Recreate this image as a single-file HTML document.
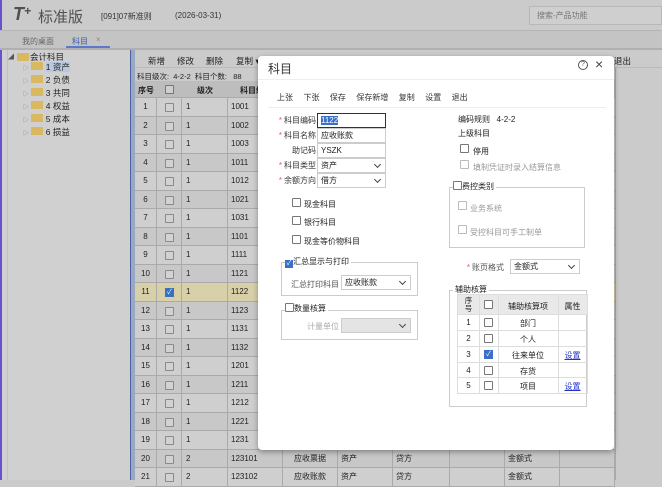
<!DOCTYPE html>
<html><head><meta charset="utf-8">
<style>
*{margin:0;padding:0;box-sizing:border-box}
body{width:662px;height:480px;overflow:hidden;position:relative;background:#cbcbcb;font-family:"Liberation Sans","Noto Sans CJK SC",sans-serif;font-size:8px;color:#222}
.a{position:absolute}
.cb{position:absolute;width:9px;height:9px;border:1px solid #777;border-radius:1px;background:#fff}
.cbd{position:absolute;width:9px;height:9px;border:1px solid #8a8a8a;border-radius:1px;background:#d2d2d2}
.row{position:absolute;left:135px;width:480px;height:18.5px;border-bottom:1px solid #aaa}
.row div{position:absolute;top:0;height:100%;line-height:18px;border-right:1px solid #aaa;font-size:8px;color:#222}
.inp{position:absolute;height:15px;border:1px solid #ccc;background:#fff;font-size:8px;line-height:13px;padding-left:3px;color:#222}
.sel::after{content:"";position:absolute;right:5px;top:3px;width:4px;height:4px;border-right:1px solid #444;border-bottom:1px solid #444;transform:rotate(45deg)}
.lbl{position:absolute;font-size:8px;color:#333;text-align:right}
.req::before{content:"*";color:#e55;margin-right:2px}
</style></head><body>
<div class="a" style="left:0;top:0;width:2px;height:480px;background:#6a4fd0"></div>
<div class="a" style="left:13px;top:4px;font-size:18px;font-weight:bold;font-style:italic;color:#505050">T<span style="font-size:12px;vertical-align:top">+</span></div>
<div class="a" style="left:38px;top:6px;font-size:15px;color:#505050">标准版</div>
<div class="a" style="left:101px;top:11px;font-size:8px;color:#333">[091]07新准则</div>
<div class="a" style="left:175px;top:11px;font-size:8px;color:#333">(2026-03-31)</div>
<div class="a" style="left:529px;top:6px;width:133px;height:19px;border:1px solid #b8b8b8;background:#cfcfcf;font-size:8px;color:#777;line-height:17px;padding-left:7px">搜索-产品功能</div>
<div class="a" style="left:0;top:30px;width:662px;height:1px;background:#b5b5b5"></div>
<div class="a" style="left:0;top:31px;width:662px;height:17px;background:#c4c4c4"></div>
<div class="a" style="left:22px;top:36px;color:#666">我的桌面</div>
<div class="a" style="left:72px;top:36px;color:#3a5fa8">科目</div>
<div class="a" style="left:96px;top:35px;color:#888">×</div>
<div class="a" style="left:66px;top:46px;width:44px;height:2px;background:#5a7ac8"></div>
<div class="a" style="left:0;top:48px;width:662px;height:2px;background:#b0b0b0"></div>
<div class="a" style="left:2px;top:50px;width:128px;height:430px;background:#d0d0d0"></div>
<div class="a" style="left:7px;top:50px;width:1px;height:430px;background:#c0c0c0"></div>
<div class="a" style="left:130px;top:50px;width:1px;height:430px;background:#4a62a0"></div>
<div class="a" style="left:131px;top:50px;width:4px;height:430px;background:#9aa8c4"></div>
<div class="a" style="left:8px;top:52px;font-size:6px;color:#555">◢</div>
<div class="a" style="left:17px;top:53px;width:12px;height:8px;background:#d8b860;border-radius:1px"></div>
<div class="a" style="left:30px;top:51px;font-size:8.5px">会计科目</div>
<div class="a" style="left:23px;top:62px;line-height:11px;font-size:8.5px">
<div><span style="color:#888;font-size:6px">▷</span> <span style="display:inline-block;width:12px;height:8px;background:#d8b860"></span> <span style="background:#b8c8e0">1 资产</span></div>
<div><span style="color:#888;font-size:6px">▷</span> <span style="display:inline-block;width:12px;height:8px;background:#d8b860"></span> 2 负债</div>
<div><span style="color:#888;font-size:6px">▷</span> <span style="display:inline-block;width:12px;height:8px;background:#d8b860"></span> 3 共同</div>
<div><span style="color:#888;font-size:6px">▷</span> <span style="display:inline-block;width:12px;height:8px;background:#d8b860"></span> 4 权益</div>
<div><span style="color:#888;font-size:6px">▷</span> <span style="display:inline-block;width:12px;height:8px;background:#d8b860"></span> 5 成本</div>
<div><span style="color:#888;font-size:6px">▷</span> <span style="display:inline-block;width:12px;height:8px;background:#d8b860"></span> 6 损益</div>
</div>
<div class="a" style="left:135px;top:50px;width:527px;height:18px;background:#cbcbcb;border-bottom:1px solid #bbb"></div>
<div class="a" style="left:148px;top:55px;font-size:8.5px">新增</div>
<div class="a" style="left:177px;top:55px;font-size:8.5px">修改</div>
<div class="a" style="left:206px;top:55px;font-size:8.5px">删除</div>
<div class="a" style="left:236px;top:55px;font-size:8.5px">复制 ▾</div>
<div class="a" style="left:614px;top:55px;font-size:8.5px">退出</div>
<div class="a" style="left:137px;top:71px;font-size:7.5px">科目级次: &nbsp;4-2-2 &nbsp;科目个数: &nbsp; 88</div>
<div class="a" style="left:135px;top:81px;width:480px;height:17px;background:#bdbdbd;border-bottom:1px solid #aaa"></div>
<div class="a" style="left:135px;top:85px;width:22px;text-align:center;font-weight:bold">序号</div>
<div class="cb" style="left:165px;top:85px;background:#cfcfcf"></div>
<div class="a" style="left:182px;top:85px;width:46px;text-align:center;font-weight:bold">级次</div>
<div class="a" style="left:240px;top:85px;font-weight:bold">科目编码</div>
<div class="a" style="left:615px;top:68px;width:1px;height:412px;background:#aaa"></div>
<div class="row" style="top:98px;background:#cfcfcf"><div style="left:0;width:22px;text-align:center">1</div><div style="left:22px;width:25px"></div><div style="left:47px;width:46px;padding-left:4px">1</div><div style="left:93px;width:55px;padding-left:3px">1001</div></div>
<div class="row" style="top:116.5px;background:#c8c8c8"><div style="left:0;width:22px;text-align:center">2</div><div style="left:22px;width:25px"></div><div style="left:47px;width:46px;padding-left:4px">1</div><div style="left:93px;width:55px;padding-left:3px">1002</div></div>
<div class="row" style="top:135px;background:#cfcfcf"><div style="left:0;width:22px;text-align:center">3</div><div style="left:22px;width:25px"></div><div style="left:47px;width:46px;padding-left:4px">1</div><div style="left:93px;width:55px;padding-left:3px">1003</div></div>
<div class="row" style="top:153.5px;background:#c8c8c8"><div style="left:0;width:22px;text-align:center">4</div><div style="left:22px;width:25px"></div><div style="left:47px;width:46px;padding-left:4px">1</div><div style="left:93px;width:55px;padding-left:3px">1011</div></div>
<div class="row" style="top:172px;background:#cfcfcf"><div style="left:0;width:22px;text-align:center">5</div><div style="left:22px;width:25px"></div><div style="left:47px;width:46px;padding-left:4px">1</div><div style="left:93px;width:55px;padding-left:3px">1012</div></div>
<div class="row" style="top:190.5px;background:#c8c8c8"><div style="left:0;width:22px;text-align:center">6</div><div style="left:22px;width:25px"></div><div style="left:47px;width:46px;padding-left:4px">1</div><div style="left:93px;width:55px;padding-left:3px">1021</div></div>
<div class="row" style="top:209px;background:#cfcfcf"><div style="left:0;width:22px;text-align:center">7</div><div style="left:22px;width:25px"></div><div style="left:47px;width:46px;padding-left:4px">1</div><div style="left:93px;width:55px;padding-left:3px">1031</div></div>
<div class="row" style="top:227.5px;background:#c8c8c8"><div style="left:0;width:22px;text-align:center">8</div><div style="left:22px;width:25px"></div><div style="left:47px;width:46px;padding-left:4px">1</div><div style="left:93px;width:55px;padding-left:3px">1101</div></div>
<div class="row" style="top:246px;background:#cfcfcf"><div style="left:0;width:22px;text-align:center">9</div><div style="left:22px;width:25px"></div><div style="left:47px;width:46px;padding-left:4px">1</div><div style="left:93px;width:55px;padding-left:3px">1111</div></div>
<div class="row" style="top:264.5px;background:#c8c8c8"><div style="left:0;width:22px;text-align:center">10</div><div style="left:22px;width:25px"></div><div style="left:47px;width:46px;padding-left:4px">1</div><div style="left:93px;width:55px;padding-left:3px">1121</div></div>
<div class="row" style="top:283px;background:#d8d0a8"><div style="left:0;width:22px;text-align:center">11</div><div style="left:22px;width:25px"></div><div style="left:47px;width:46px;padding-left:4px">1</div><div style="left:93px;width:55px;padding-left:3px">1122</div></div>
<div class="row" style="top:301.5px;background:#c8c8c8"><div style="left:0;width:22px;text-align:center">12</div><div style="left:22px;width:25px"></div><div style="left:47px;width:46px;padding-left:4px">1</div><div style="left:93px;width:55px;padding-left:3px">1123</div></div>
<div class="row" style="top:320px;background:#cfcfcf"><div style="left:0;width:22px;text-align:center">13</div><div style="left:22px;width:25px"></div><div style="left:47px;width:46px;padding-left:4px">1</div><div style="left:93px;width:55px;padding-left:3px">1131</div></div>
<div class="row" style="top:338.5px;background:#c8c8c8"><div style="left:0;width:22px;text-align:center">14</div><div style="left:22px;width:25px"></div><div style="left:47px;width:46px;padding-left:4px">1</div><div style="left:93px;width:55px;padding-left:3px">1132</div></div>
<div class="row" style="top:357px;background:#cfcfcf"><div style="left:0;width:22px;text-align:center">15</div><div style="left:22px;width:25px"></div><div style="left:47px;width:46px;padding-left:4px">1</div><div style="left:93px;width:55px;padding-left:3px">1201</div></div>
<div class="row" style="top:375.5px;background:#c8c8c8"><div style="left:0;width:22px;text-align:center">16</div><div style="left:22px;width:25px"></div><div style="left:47px;width:46px;padding-left:4px">1</div><div style="left:93px;width:55px;padding-left:3px">1211</div></div>
<div class="row" style="top:394px;background:#cfcfcf"><div style="left:0;width:22px;text-align:center">17</div><div style="left:22px;width:25px"></div><div style="left:47px;width:46px;padding-left:4px">1</div><div style="left:93px;width:55px;padding-left:3px">1212</div></div>
<div class="row" style="top:412.5px;background:#c8c8c8"><div style="left:0;width:22px;text-align:center">18</div><div style="left:22px;width:25px"></div><div style="left:47px;width:46px;padding-left:4px">1</div><div style="left:93px;width:55px;padding-left:3px">1221</div></div>
<div class="row" style="top:431px;background:#cfcfcf"><div style="left:0;width:22px;text-align:center">19</div><div style="left:22px;width:25px"></div><div style="left:47px;width:46px;padding-left:4px">1</div><div style="left:93px;width:55px;padding-left:3px">1231</div></div>
<div class="row" style="top:449.5px;background:#c8c8c8"><div style="left:0;width:22px;text-align:center">20</div><div style="left:22px;width:25px"></div><div style="left:47px;width:46px;padding-left:4px">2</div><div style="left:93px;width:55px;padding-left:3px">123101</div><div style="left:148px;width:55px;text-align:center">应收票据</div><div style="left:203px;width:55px;padding-left:3px">资产</div><div style="left:258px;width:57px;padding-left:3px">贷方</div><div style="left:315px;width:55px"></div><div style="left:370px;width:55px;padding-left:3px">金额式</div><div style="left:425px;width:55px"></div></div>
<div class="row" style="top:468px;background:#cfcfcf"><div style="left:0;width:22px;text-align:center">21</div><div style="left:22px;width:25px"></div><div style="left:47px;width:46px;padding-left:4px">2</div><div style="left:93px;width:55px;padding-left:3px">123102</div><div style="left:148px;width:55px;text-align:center">应收账款</div><div style="left:203px;width:55px;padding-left:3px">资产</div><div style="left:258px;width:57px;padding-left:3px">贷方</div><div style="left:315px;width:55px"></div><div style="left:370px;width:55px;padding-left:3px">金额式</div><div style="left:425px;width:55px"></div></div>
<div class="cbd" style="left:165px;top:103px"></div><div class="cbd" style="left:165px;top:122px"></div><div class="cbd" style="left:165px;top:140px"></div><div class="cbd" style="left:165px;top:159px"></div><div class="cbd" style="left:165px;top:177px"></div><div class="cbd" style="left:165px;top:196px"></div><div class="cbd" style="left:165px;top:214px"></div><div class="cbd" style="left:165px;top:233px"></div><div class="cbd" style="left:165px;top:251px"></div><div class="cbd" style="left:165px;top:270px"></div>
<div class="a" style="left:165px;top:288px;width:9px;height:9px;background:#3a70c0;color:#fff;font-size:7px;line-height:9px;text-align:center">✓</div>
<div class="cbd" style="left:165px;top:307px"></div><div class="cbd" style="left:165px;top:325px"></div><div class="cbd" style="left:165px;top:344px"></div><div class="cbd" style="left:165px;top:362px"></div><div class="cbd" style="left:165px;top:381px"></div><div class="cbd" style="left:165px;top:399px"></div><div class="cbd" style="left:165px;top:418px"></div><div class="cbd" style="left:165px;top:436px"></div><div class="cbd" style="left:165px;top:455px"></div><div class="cbd" style="left:165px;top:473px"></div>

<div class="a" style="left:258px;top:56px;width:356px;height:394px;background:#fff;border-radius:4px;box-shadow:0 2px 6px rgba(0,0,0,.35)">
 <div class="a" style="left:10px;top:4px;font-size:12px;color:#333">科目</div>
 <div class="a" style="left:320px;top:4px;width:10px;height:10px;border:1px solid #555;border-radius:50%;font-size:7px;line-height:8px;text-align:center;color:#555">?</div>
 <div class="a" style="left:337px;top:0px;font-size:14px;color:#444">×</div>
 <div class="a" style="left:0;top:23px;width:356px;height:1px;background:#eee"></div>
 <div class="a" style="left:19px;top:36px;font-size:8px;color:#333;word-spacing:3px">上张 &nbsp;下张 &nbsp;保存 &nbsp;保存新增 &nbsp;复制 &nbsp;设置 &nbsp;退出</div>
 <div class="a" style="left:10px;top:51px;width:338px;height:1px;background:#eee"></div>

 <div class="lbl req" style="left:14px;top:59px;width:44px">科目编码</div>
 <div class="inp" style="left:59px;top:57px;width:69px;border:1px solid #333"><span style="background:#3a70c8;color:#fff">1122</span></div>
 <div class="lbl req" style="left:14px;top:74px;width:44px">科目名称</div>
 <div class="inp" style="left:59px;top:72px;width:69px">应收账款</div>
 <div class="lbl" style="left:14px;top:89px;width:44px">助记码</div>
 <div class="inp" style="left:59px;top:87px;width:69px">YSZK</div>
 <div class="lbl req" style="left:14px;top:104px;width:44px">科目类型</div>
 <div class="inp sel" style="left:59px;top:102px;width:69px">资产</div>
 <div class="lbl req" style="left:14px;top:119px;width:44px">余额方向</div>
 <div class="inp sel" style="left:59px;top:117px;width:69px">借方</div>
 <div class="cb" style="left:34px;top:142px"></div><div class="a" style="left:46px;top:143px">现金科目</div>
 <div class="cb" style="left:34px;top:160px"></div><div class="a" style="left:46px;top:161px">银行科目</div>
 <div class="cb" style="left:34px;top:179px"></div><div class="a" style="left:46px;top:180px">现金等价物科目</div>

 <div class="a" style="left:200px;top:58px">编码规则 &nbsp;&nbsp;4-2-2</div>
 <div class="a" style="left:200px;top:72px">上级科目</div>
 <div class="cb" style="left:202px;top:88px"></div><div class="a" style="left:215px;top:90px">停用</div>
 <div class="cb" style="left:202px;top:104px;border-color:#bbb"></div><div class="a" style="left:215px;top:106px;color:#999">填制凭证时录入结算信息</div>
 <div class="a" style="left:191px;top:131px;width:136px;height:61px;border:1px solid #ccc"></div>
 <div class="a" style="left:195px;top:125px;background:#fff;padding-right:2px"><span class="cb" style="position:relative;display:inline-block;vertical-align:-1px"></span>费控类别</div>
 <div class="cb" style="left:200px;top:145px;border-color:#bbb"></div><div class="a" style="left:212px;top:147px;color:#999">业务系统</div>
 <div class="cb" style="left:200px;top:169px;border-color:#bbb"></div><div class="a" style="left:212px;top:171px;color:#999">受控科目可手工制单</div>

 <div class="a" style="left:23px;top:206px;width:137px;height:34px;border:1px solid #ccc"></div>
 <div class="a" style="left:27px;top:200px;background:#fff;padding-right:2px"><span style="display:inline-block;width:8px;height:8px;background:#3a70c8;color:#fff;font-size:7px;line-height:8px;text-align:center;vertical-align:-1px">✓</span>汇总显示与打印</div>
 <div class="lbl" style="left:20px;top:223px;width:61px;color:#555">汇总打印科目</div>
 <div class="inp sel" style="left:83px;top:219px;width:70px">应收账款</div>
 <div class="a" style="left:23px;top:254px;width:137px;height:30px;border:1px solid #ccc"></div>
 <div class="a" style="left:27px;top:247px;background:#fff;padding-right:2px"><span class="cb" style="position:relative;display:inline-block;vertical-align:-1px"></span>数量核算</div>
 <div class="lbl" style="left:30px;top:265px;width:51px;color:#aaa">计量单位</div>
 <div class="inp sel" style="left:83px;top:262px;width:70px;background:#e4e4e4"></div>

 <div class="lbl req" style="left:200px;top:206px;width:46px;color:#555">账页格式</div>
 <div class="inp sel" style="left:252px;top:203px;width:70px">金额式</div>
 <div class="a" style="left:191px;top:234px;width:138px;height:117px;border:1px solid #ccc"></div>
 <div class="a" style="left:195px;top:228px;background:#fff;padding:0 2px">辅助核算</div>
 <div class="a" style="left:199px;top:238px;width:131px;height:100px;border:1px solid #ddd">
  <div class="a" style="left:0;top:0;width:129px;height:19px;background:#e9e9e9"></div>
  <div class="a" style="left:0;top:2px;width:21px;text-align:center;font-size:7.5px;line-height:8px">序<br>号</div>
  <div class="cb" style="left:26px;top:5px"></div>
  <div class="a" style="left:40px;top:6px;width:60px;text-align:center">辅助核算项</div>
  <div class="a" style="left:100px;top:6px;width:29px;text-align:center">属性</div>
  <div class="a" style="left:21px;top:0;width:1px;height:98px;background:#ddd"></div>
  <div class="a" style="left:40px;top:0;width:1px;height:98px;background:#ddd"></div>
  <div class="a" style="left:100px;top:0;width:1px;height:98px;background:#ddd"></div>
  <div class="a" style="left:0;top:19px;width:129px;height:1px;background:#ddd"></div>
  <div class="a" style="left:0;top:35px;width:129px;height:1px;background:#ddd"></div>
  <div class="a" style="left:0;top:51px;width:129px;height:1px;background:#ddd"></div>
  <div class="a" style="left:0;top:67px;width:129px;height:1px;background:#ddd"></div>
  <div class="a" style="left:0;top:82px;width:129px;height:1px;background:#ddd"></div>
  <div class="a" style="left:0;top:23px;width:21px;text-align:center">1</div><div class="cb" style="left:26px;top:23px"></div><div class="a" style="left:40px;top:23px;width:60px;text-align:center">部门</div>
  <div class="a" style="left:0;top:39px;width:21px;text-align:center">2</div><div class="cb" style="left:26px;top:39px"></div><div class="a" style="left:40px;top:39px;width:60px;text-align:center">个人</div>
  <div class="a" style="left:0;top:55px;width:21px;text-align:center">3</div><div class="a" style="left:26px;top:55px;width:9px;height:9px;background:#3a70c8;color:#fff;font-size:7px;line-height:9px;text-align:center">✓</div><div class="a" style="left:40px;top:55px;width:60px;text-align:center">往来单位</div><div class="a" style="left:100px;top:55px;width:29px;text-align:center;color:#2233cc;text-decoration:underline">设置</div>
  <div class="a" style="left:0;top:71px;width:21px;text-align:center">4</div><div class="cb" style="left:26px;top:71px"></div><div class="a" style="left:40px;top:71px;width:60px;text-align:center">存货</div>
  <div class="a" style="left:0;top:86px;width:21px;text-align:center">5</div><div class="cb" style="left:26px;top:86px"></div><div class="a" style="left:40px;top:86px;width:60px;text-align:center">项目</div><div class="a" style="left:100px;top:86px;width:29px;text-align:center;color:#2233cc;text-decoration:underline">设置</div>
 </div>
</div>
</body></html>
